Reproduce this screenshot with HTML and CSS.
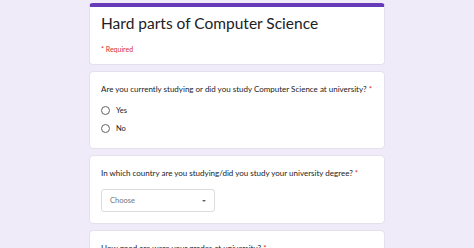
FILE: index.html
```html
<!DOCTYPE html>
<html>
<head>
 <meta charset="utf-8">
 <title>Hard parts of Computer Science</title>
 <link rel="stylesheet" href="styles.css">
</head>
<body>
<div class="FormWrap">
 <div class="Card HeaderCard">
  <h1 class="FormTitle">Hard parts of Computer Science</h1>
  <div class="Required">* Required</div>
 </div>

 <div class="Card">
  <div class="Question">Are you currently studying or did you study Computer Science at university? <span class="Star">*</span></div>
  <label class="Option"><span class="Radio"></span>Yes</label>
  <label class="Option"><span class="Radio"></span>No</label>
 </div>

 <div class="Card">
  <div class="Question">In which country are you studying/did you study your university degree? <span class="Star">*</span></div>
  <div class="Select">
   <span>Choose</span>
   <span class="Arrow"></span>
  </div>
 </div>

 <div class="Card">
  <div class="Question">How good are were your grades at university? <span class="Star">*</span></div>
 </div>
</div>
</body>
</html>
```

FILE: styles.css
```css
body {
 margin:0;
 background-color:#f0ebf8;
 font-family:Lato, "Open Sans", sans-serif;
 color:#202124;
}

.FormWrap {
 width:296px;
 margin:0 auto;
 padding-top:3px;
 display:flex;
 flex-direction:column;
 gap:6px;
}

.Card {
 background:#ffffff;
 border:1px solid #e4e0ec;
 border-radius:4px;
 padding:11px 12px 11px 11px;
}

.HeaderCard {
 border-top:4px solid #673ab7;
 padding-top:3px;
 padding-bottom:11px;
}

.FormTitle {
 margin:0;
 font-weight:400;
 font-size:15.5px;
 line-height:26px;
 white-space:nowrap;
}
.Required {
 margin-top:9px;
 font-size:7px;
 color:#d93025;
}

.Question {
 font-size:8px;
 line-height:12px;
 white-space:nowrap;
}
.Star {
 color:#d93025;
}

.Option {
 display:flex;
 align-items:center;
 font-size:7.5px;
 height:18px;
 margin-top:6px;
}
.Option + .Option {
 margin-top:0;
}
.Radio {
 width:7px;
 height:7px;
 border:1.3px solid #5f6368;
 border-radius:50%;
 margin-right:6px;
}

.Select {
 margin-top:10px;
 width:96px;
 height:21px;
 border:1px solid #dadce0;
 border-radius:3px;
 display:flex;
 align-items:center;
 justify-content:space-between;
 padding:0 8px;
 font-size:7.5px;
 color:#70757a;
}
.Arrow {
 width:0;
 height:0;
 border-left:2.5px solid transparent;
 border-right:2.5px solid transparent;
 border-top:2.5px solid #5f6368;
}
```
